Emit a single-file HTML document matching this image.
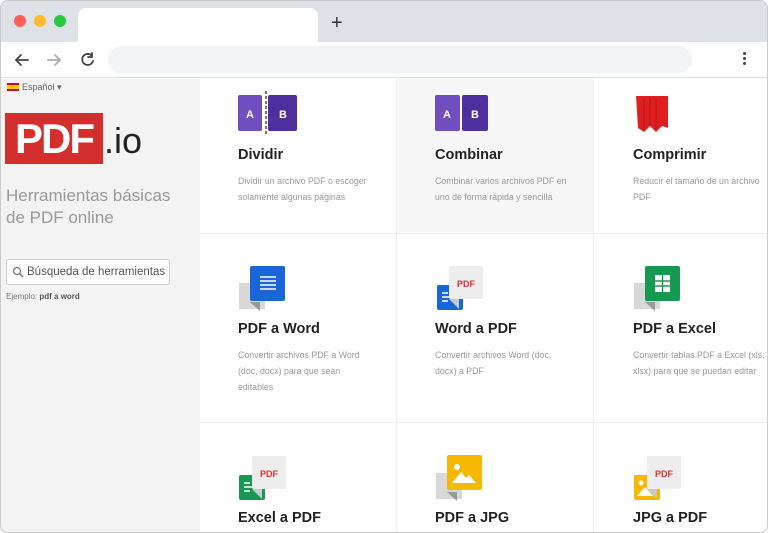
<!DOCTYPE html>
<html><head><meta charset="utf-8"><style>
*{margin:0;padding:0;box-sizing:border-box}
body{width:768px;height:533px;overflow:hidden;background:#fff;font-family:"Liberation Sans",sans-serif;position:relative}
.abs{position:absolute}
.top{left:0;top:0;width:768px;height:42px;background:#dee1e6;border-radius:8px 8px 0 0}
.dot{width:12px;height:12px;border-radius:50%;top:15px}
.tab{left:78px;top:8px;width:240px;height:36px;background:#fff;border-radius:8px 8px 0 0}
.bar{left:0;top:42px;width:768px;height:36px;background:#fff;border-bottom:1px solid #ddd}
.addr{left:108px;top:46px;width:584px;height:27px;background:#f1f3f4;border-radius:14px}
.side{left:0;top:79px;width:200px;height:454px;background:#f3f3f3}
.cell{border-right:1px solid #eee;border-bottom:1px solid #eee;background:#fff}
.t{font-size:14.5px;font-weight:bold;color:#222;white-space:nowrap}
.d{font-size:8.8px;color:#999;line-height:16px;width:135px}
</style></head><body>
<div class="abs top"></div>
<div class="abs dot" style="left:14px;background:#fe5f57"></div>
<div class="abs dot" style="left:34px;background:#febc2e"></div>
<div class="abs dot" style="left:54px;background:#28c840"></div>
<div class="abs tab"></div>
<div class="abs" style="left:331px;top:12px;font-size:20px;color:#333">+</div>
<div class="abs bar"></div>
<svg class="abs" style="left:12px;top:50px" width="90" height="20" viewBox="0 0 90 20" fill="none" stroke-width="1.8" stroke-linecap="round">
<path d="M16 10H4M9 5L4 10L9 15" stroke="#444"/>
<path d="M36 10H48M43 5L48 10L43 15" stroke="#aaa"/>
<path d="M80 6A5.5 5.5 0 1 0 81 11M80 3V7H76" stroke="#444"/>
</svg>
<div class="abs addr"></div>
<div class="abs" style="left:743px;top:52px;width:4px">
<div style="width:3px;height:3px;background:#444;border-radius:50%;margin-bottom:2px"></div>
<div style="width:3px;height:3px;background:#444;border-radius:50%;margin-bottom:2px"></div>
<div style="width:3px;height:3px;background:#444;border-radius:50%"></div></div>

<div class="abs side"></div>
<div class="abs" style="left:7px;top:83px;width:12px;height:8px;background:#c60b1e"><div style="margin-top:2px;height:4px;background:#ffc400"></div></div>
<div class="abs" style="left:22px;top:82px;font-size:9px;color:#666">Español ▾</div>
<div class="abs" style="left:5px;top:113px;width:98px;height:51px;background:#d32f2f;color:#fff;font-weight:bold;font-size:42px;line-height:51px;text-align:center;letter-spacing:-2px">PDF</div>
<div class="abs" style="left:104px;top:121px;font-size:36px;color:#222;line-height:40px">.io</div>
<div class="abs" style="left:6px;top:185px;font-size:17px;color:#999;line-height:22px">Herramientas básicas<br>de PDF online</div>
<div class="abs" style="left:6px;top:259px;width:164px;height:26px;background:#fff;border:1px solid #ccc;border-radius:3px;font-size:11.5px;color:#555;padding:6px 0 0 20px;white-space:nowrap;overflow:hidden">Búsqueda de herramientas</div>
<svg class="abs" style="left:12px;top:266px" width="12" height="12"><circle cx="5" cy="5" r="3.5" stroke="#777" fill="none" stroke-width="1.3"/><path d="M7.5 7.5L11 11" stroke="#777" stroke-width="1.3"/></svg>
<div class="abs" style="left:6px;top:292px;font-size:8px;color:#777">Ejemplo: <b style="color:#555">pdf a word</b></div>

<div class="abs cell" style="left:200px;top:79px;width:197px;height:155px"></div>
<div class="abs cell" style="left:397px;top:79px;width:197px;height:155px;background:#f7f7f7"></div>
<div class="abs cell" style="left:594px;top:79px;width:174px;height:155px"></div>
<div class="abs cell" style="left:200px;top:234px;width:197px;height:189px"></div>
<div class="abs cell" style="left:397px;top:234px;width:197px;height:189px"></div>
<div class="abs cell" style="left:594px;top:234px;width:174px;height:189px"></div>
<div class="abs cell" style="left:200px;top:423px;width:197px;height:110px"></div>
<div class="abs cell" style="left:397px;top:423px;width:197px;height:110px"></div>
<div class="abs cell" style="left:594px;top:423px;width:174px;height:110px"></div>

<svg class="abs" style="left:238px;top:89px" width="60" height="48">
<rect x="0" y="6" width="24" height="36" rx="2" fill="#6f4fc0"/><rect x="30" y="6" width="29" height="36" rx="2" fill="#4e2f9e"/>
<path d="M28 2V46" stroke="#777" stroke-width="2" stroke-dasharray="3 2"/>
<text x="12" y="29" font-size="11" font-weight="bold" fill="#fff" text-anchor="middle" font-family="Liberation Sans">A</text>
<text x="45" y="29" font-size="11" font-weight="bold" fill="#fff" text-anchor="middle" font-family="Liberation Sans">B</text></svg>
<svg class="abs" style="left:435px;top:95px" width="54" height="36">
<rect x="0" y="0" width="25" height="36" rx="2" fill="#6f4fc0"/><rect x="27" y="0" width="26" height="36" rx="2" fill="#4e2f9e"/>
<text x="12" y="23" font-size="11" font-weight="bold" fill="#fff" text-anchor="middle" font-family="Liberation Sans">A</text>
<text x="40" y="23" font-size="11" font-weight="bold" fill="#fff" text-anchor="middle" font-family="Liberation Sans">B</text></svg>
<svg class="abs" style="left:634px;top:94px" width="36" height="38">
<path d="M2 2H34V34L28 32L22 38L16 32L10 38L4 34Z" fill="#e02020"/><path d="M10 4V36M16 4V32M22 4V36" stroke="#b01515" stroke-width="1"/></svg>

<div class="abs t" style="left:238px;top:147px">Dividir</div>
<div class="abs t" style="left:435px;top:147px">Combinar</div>
<div class="abs t" style="left:633px;top:147px">Comprimir</div>
<div class="abs d" style="left:238px;top:173px">Dividir un archivo PDF o escoger solamente algunas páginas</div>
<div class="abs d" style="left:435px;top:173px">Combinar varios archivos PDF en uno de forma rápida y sencilla</div>
<div class="abs d" style="left:633px;top:173px;width:134px">Reducir el tamaño de un archivo PDF</div>

<svg class="abs" style="left:238px;top:265px" width="50" height="46">
<rect x="1" y="18" width="26" height="26" fill="#d8d8d8"/><path d="M12 37L22 46V37Z" fill="#999"/>
<rect x="12" y="1" width="35" height="35" rx="2" fill="#1a66d8"/>
<path d="M22 12H38M22 16H38M22 20H38M22 24H38" stroke="#fff" stroke-width="1.6"/></svg>
<svg class="abs" style="left:435px;top:265px" width="50" height="46">
<rect x="2" y="20" width="26" height="25" rx="2" fill="#1a66d8"/>
<path d="M7 28H13M7 32H15M7 36H13" stroke="#fff" stroke-width="1.5"/>
<rect x="14" y="1" width="34" height="33" rx="2" fill="#ededed"/><path d="M14 34L24 44V34Z" fill="#c9c9c9"/>
<text x="31" y="22" font-size="9" font-weight="bold" fill="#e03030" text-anchor="middle" font-family="Liberation Sans">PDF</text></svg>
<svg class="abs" style="left:633px;top:265px" width="50" height="46">
<rect x="1" y="18" width="26" height="26" fill="#d8d8d8"/><path d="M12 37L22 46V37Z" fill="#999"/>
<rect x="12" y="1" width="35" height="35" rx="2" fill="#169a52"/>
<rect x="22" y="10" width="15" height="17" fill="#fff"/><path d="M22 16H37M22 21H37M29.5 10V27" stroke="#169a52" stroke-width="1.5"/></svg>
<div class="abs t" style="left:238px;top:321px">PDF a Word</div>
<div class="abs t" style="left:435px;top:321px">Word a PDF</div>
<div class="abs t" style="left:633px;top:321px">PDF a Excel</div>
<div class="abs d" style="left:238px;top:347px;width:128px">Convertir archivos PDF a Word (doc, docx) para que sean editables</div>
<div class="abs d" style="left:435px;top:347px;width:125px">Convertir archivos Word (doc, docx) a PDF</div>
<div class="abs d" style="left:633px;top:347px;width:135px">Convertir tablas PDF a Excel (xls, xlsx) para que se puedan editar</div>

<svg class="abs" style="left:238px;top:455px" width="50" height="46">
<rect x="1" y="20" width="26" height="25" rx="2" fill="#169a52"/>
<path d="M6 28H12M6 32H14M6 36H12" stroke="#fff" stroke-width="1.5"/>
<rect x="14" y="1" width="34" height="33" rx="2" fill="#ededed"/><path d="M14 34L24 44V34Z" fill="#c9c9c9"/>
<text x="31" y="22" font-size="9" font-weight="bold" fill="#e03030" text-anchor="middle" font-family="Liberation Sans">PDF</text></svg>
<svg class="abs" style="left:435px;top:455px" width="50" height="46">
<rect x="1" y="18" width="26" height="26" fill="#d8d8d8"/><path d="M12 37L22 46V37Z" fill="#999"/>
<rect x="12" y="0" width="35" height="35" rx="2" fill="#f6b800"/>
<circle cx="22" cy="12" r="3" fill="#fff"/><path d="M17 28L26 17L31 23L34 20L41 28Z" fill="#fff"/></svg>
<svg class="abs" style="left:633px;top:455px" width="50" height="46">
<rect x="1" y="20" width="26" height="25" rx="2" fill="#f6b800"/>
<circle cx="8" cy="28" r="2.5" fill="#fff"/><path d="M4 41L12 32L20 41Z" fill="#fff"/>
<rect x="14" y="1" width="34" height="33" rx="2" fill="#ededed"/><path d="M14 34L24 44V34Z" fill="#c9c9c9"/>
<text x="31" y="22" font-size="9" font-weight="bold" fill="#e03030" text-anchor="middle" font-family="Liberation Sans">PDF</text></svg>
<div class="abs t" style="left:238px;top:510px">Excel a PDF</div>
<div class="abs t" style="left:435px;top:510px">PDF a JPG</div>
<div class="abs t" style="left:633px;top:510px">JPG a PDF</div>
<div class="abs" style="left:0;top:0;width:768px;height:533px;border:1px solid #ccc;border-radius:8px;pointer-events:none"></div>
</body></html>
